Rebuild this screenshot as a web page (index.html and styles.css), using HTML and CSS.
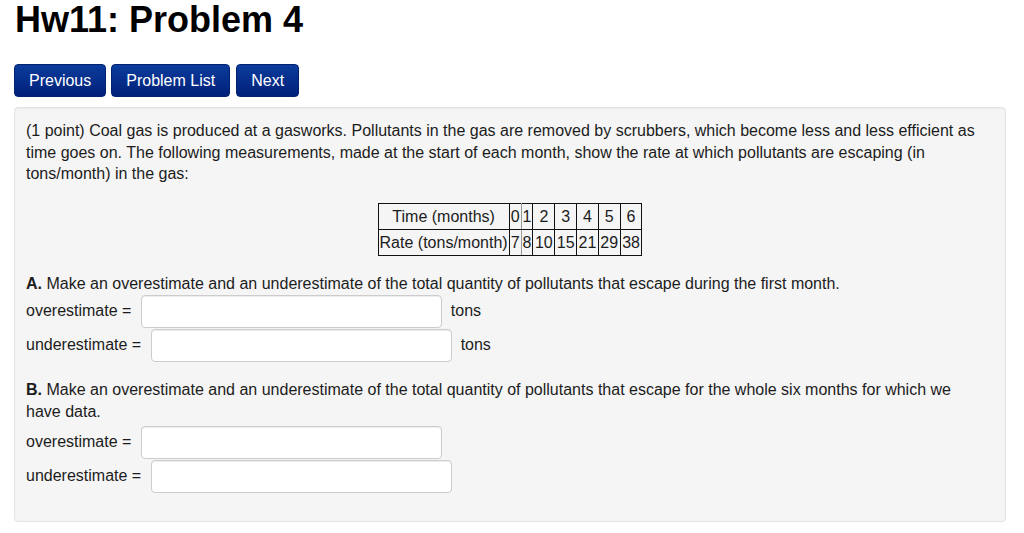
FILE: index.html
```html
<!doctype html>
<html>
<head>
	<meta charset='utf-8'>
	<title>Hw11: Problem 4</title>

	<link rel="stylesheet" href="styles.css">
</head>
<body>

	<div class='page'>
		<h1 class='title'>Hw11: Problem 4</h1>

		<div class='nav'>
			<a class='nav-button' href='#'>Previous</a>
			<a class='nav-button' href='#'>Problem List</a>
			<a class='nav-button' href='#'>Next</a>
		</div>

		<div class='problem'>
			<p class='intro'>(1 point) Coal gas is produced at a gasworks. Pollutants in the gas are removed by scrubbers, which become less and less efficient as time goes on. The following measurements, made at the start of each month, show the rate at which pollutants are escaping (in tons/month) in the gas:</p>

			<table class='data'>
				<tr>
					<td class='head'>Time (months)</td>
					<td>0</td><td>1</td><td>2</td><td>3</td><td>4</td><td>5</td><td>6</td>
				</tr>
				<tr>
					<td class='head'>Rate (tons/month)</td>
					<td>7</td><td>8</td><td>10</td><td>15</td><td>21</td><td>29</td><td>38</td>
				</tr>
			</table>

			<p class='part'><b>A.</b> Make an overestimate and an underestimate of the total quantity of pollutants that escape during the first month.</p>
			<div class='answer'>overestimate = <input class='answer-box' type='text'> <span class='unit'>tons</span></div>
			<div class='answer'>underestimate = <input class='answer-box' type='text'> <span class='unit'>tons</span></div>

			<p class='part part-b'><b>B.</b> Make an overestimate and an underestimate of the total quantity of pollutants that escape for the whole six months for which we have data.</p>
			<div class='answer'>overestimate = <input class='answer-box' type='text'></div>
			<div class='answer'>underestimate = <input class='answer-box' type='text'></div>
		</div>
	</div>

</body>
</html>
```

FILE: styles.css
```css
body {
	margin: 0;
	background: #fff;
	font-family: "Liberation Sans", Arial, sans-serif;
	color: #1c1c1c;
}

.page {
	margin-left: 14px;
	width: 992px;
}

/* Page heading */
.title {
	font-size: 36px;
	line-height: 40px;
	font-weight: bold;
	color: #000;
	margin: 0;
	padding-left: 1px;
}

/* Previous / Problem List / Next */
.nav {
	display: flex;
	gap: 5px;
	margin-top: 24px;
}

.nav-button {
	display: block;
	height: 31px;
	line-height: 31px;
	padding: 0 14px;
	font-size: 16px;
	color: #fff;
	text-decoration: none;
	background: linear-gradient(#0b3c9c, #00207a);
	border: 1px solid #00226f;
	border-radius: 4px;
}

.nav-button:last-child {
	margin-left: 1px;
}

/* The grey problem well */
.problem {
	margin-top: 10px;
	padding: 12px 11px 28px;
	background: #f5f5f5;
	border: 1px solid #e3e3e3;
	border-radius: 4px;
	box-shadow: inset 0 1px 1px rgba(0, 0, 0, 0.04);
	font-size: 16px;
	line-height: 21.5px;
}

.problem p {
	margin: 0;
	padding-right: 14px;
}

.intro {
	margin-bottom: 18px !important;
}

/* Measurements table, centred in the well */
.data {
	border-collapse: collapse;
	margin: 0 auto;
}

.data td {
	border: 1px solid #111;
	padding: 2px 1.5px;
	text-align: center;
	line-height: 21px;
}

.data td:nth-child(2) {
	border-right-color: #9a9a9a;
	padding: 2px 1px;
}

.data td:nth-child(3) {
	padding: 2px 1px;
}

.data td.head {
	padding: 2px 1px;
}

.part {
	margin-top: 17px !important;
}

.part-b {
	margin-bottom: 3px !important;
}

/* Answer rows */
.answer {
	display: flex;
	align-items: center;
	height: 34px;
	white-space: pre;
}

.answer-box {
	box-sizing: border-box;
	width: 301px;
	height: 33px;
	margin: 0 9px 0 5px;
	border: 1px solid #ccc;
	border-radius: 4px;
	background: #fff;
	box-shadow: inset 0 1px 1px rgba(0, 0, 0, 0.075);
	font: inherit;
}
```
